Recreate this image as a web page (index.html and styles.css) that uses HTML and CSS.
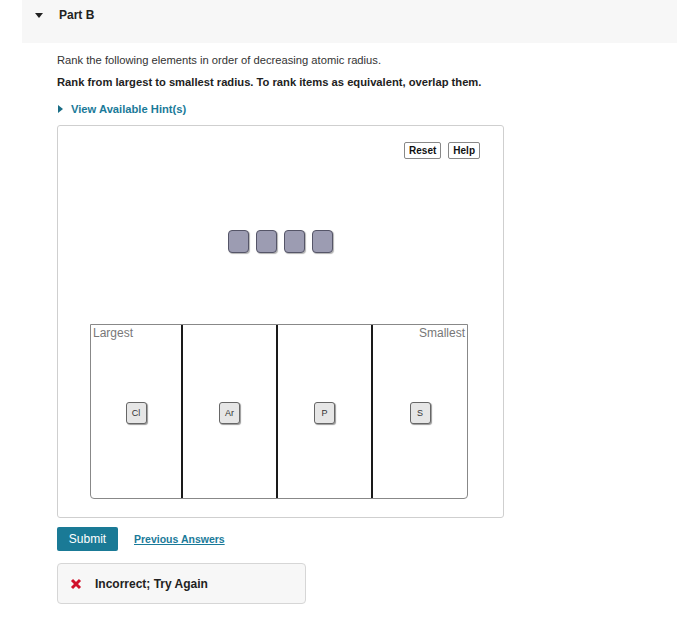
FILE: index.html
```html
<!DOCTYPE html>
<html>
<head>
<meta charset="utf-8">
<link rel="stylesheet" href="styles.css">
</head>
<body>
<div class="part-header">
  <span class="caret-down"></span>
  <span class="part-title">Part B</span>
</div>
<div class="content">
  <p class="prompt">Rank the following elements in order of decreasing atomic radius.</p>
  <p class="instr">Rank from largest to smallest radius. To rank items as equivalent, overlap them.</p>
  <div class="hint"><span class="caret-right"></span><span class="hint-text">View Available Hint(s)</span></div>
  <div class="work">
    <div class="tools">
      <button class="tbtn">Reset</button>
      <button class="tbtn">Help</button>
    </div>
    <div class="tiles">
      <span class="tile"></span>
      <span class="tile"></span>
      <span class="tile"></span>
      <span class="tile"></span>
    </div>
    <div class="rank">
      <div class="col"><span class="lbl lbl-left">Largest</span><span class="chip">Cl</span></div>
      <div class="col"><span class="chip">Ar</span></div>
      <div class="col"><span class="chip">P</span></div>
      <div class="col"><span class="lbl lbl-right">Smallest</span><span class="chip">S</span></div>
    </div>
  </div>
  <div class="actions">
    <button class="submit">Submit</button>
    <a class="prev" href="#">Previous Answers</a>
  </div>
  <div class="feedback">
    <svg class="xicon" width="12" height="12" viewBox="0 0 12 12"><path d="M2 2 L10 10 M10 2 L2 10" stroke="#d0112b" stroke-width="3" stroke-linecap="butt"/></svg>
    <span class="fb-text">Incorrect; Try Again</span>
  </div>
</div>
</body>
</html>
```
FILE: styles.css
```css
html, body { margin: 0; padding: 0; background: #fff; }
body { font-family: "Liberation Sans", Arial, sans-serif; color: #333; width: 700px; height: 626px; overflow: hidden; }

.part-header {
  margin-left: 22px; width: 655px; height: 43px;
  background: #f7f7f7;
  display: flex; align-items: flex-start;
  padding-top: 9px; box-sizing: border-box;
}
.caret-down {
  width: 0; height: 0; margin-left: 13px; margin-top: 4px;
  border-left: 4px solid transparent; border-right: 4px solid transparent;
  border-top: 5px solid #222;
}
.part-title { margin-left: 16px; font-size: 12px; font-weight: bold; color: #222; line-height: 13px; }

.content { padding-left: 57px; }
.prompt { margin: 11px 0 0 0; font-size: 11.2px; line-height: 13px; color: #333; }
.instr { margin: 9px 0 0 0; font-size: 11.2px; line-height: 13px; font-weight: bold; color: #222; }
.hint { margin-top: 13px; display: flex; align-items: center; height: 13px; }
.caret-right {
  width: 0; height: 0; margin-left: 1px;
  border-top: 4px solid transparent; border-bottom: 4px solid transparent;
  border-left: 5px solid #1a6d86;
}
.hint-text { margin-left: 8px; font-size: 11.2px; font-weight: bold; color: #1a7a99; }

.work {
  margin-top: 10px; width: 447px; height: 393px; box-sizing: border-box;
  border: 1px solid #cfcfcf; border-radius: 3px;
  display: flex; flex-direction: column;
}
.tools { display: flex; justify-content: flex-end; gap: 7px; margin-top: 16px; margin-right: 23px; }
.tbtn {
  font-family: "Liberation Sans", Arial, sans-serif; font-size: 10px; font-weight: bold; color: #111;
  background: #fff; border: 1px solid #888; border-radius: 2px;
  height: 17px; padding: 0 4px; margin: 0; line-height: 14px;
}
.tiles { display: flex; justify-content: center; gap: 7px; margin-top: 71px; }
.tile {
  width: 21px; height: 23px; box-sizing: border-box;
  background: #9c9cb2; border: 1px solid #555568; border-radius: 4px;
  box-shadow: 1px 1px 1px rgba(0,0,0,0.3);
}
.rank {
  margin-top: 71px; margin-left: 32px; width: 378px; height: 175px; box-sizing: border-box;
  border: 1px solid #888; border-radius: 0 0 4px 4px;
  display: grid; grid-template-columns: 90px 95px 95px 1fr;
}
.col { position: relative; display: flex; align-items: center; justify-content: center; border-left: 2px solid #1a1a1a; }
.col:first-child { border-left: none; }
.lbl { position: absolute; top: 2px; font-size: 12px; color: #777; line-height: 13px; }
.lbl-left { left: 2px; }
.lbl-right { right: 2px; }
.chip {
  width: 21px; height: 22px; box-sizing: border-box;
  display: flex; align-items: center; justify-content: center;
  font-size: 9px; color: #333;
  background: #e6e6e6; border: 1px solid #666; border-radius: 3px;
  box-shadow: 1px 1px 1px rgba(0,0,0,0.4);
  margin-top: 2px;
}

.actions { display: flex; align-items: center; margin-top: 9px; }
.submit {
  font-family: "Liberation Sans", Arial, sans-serif; font-size: 12px; color: #fff;
  background: #1a7a96; border: none; border-radius: 2px;
  width: 61px; height: 24px; margin: 0; padding: 0;
}
.prev { margin-left: 16px; font-size: 10.5px; font-weight: bold; color: #1a7a99; text-decoration: underline; }

.feedback {
  margin-top: 12px; width: 249px; height: 41px; box-sizing: border-box;
  background: #f7f7f7; border: 1px solid #d6d6d6; border-radius: 4px;
  display: flex; align-items: center; padding-left: 12px;
}
.xicon { display: block; }
.fb-text { margin-left: 13px; font-size: 12px; font-weight: bold; color: #222; }
```
